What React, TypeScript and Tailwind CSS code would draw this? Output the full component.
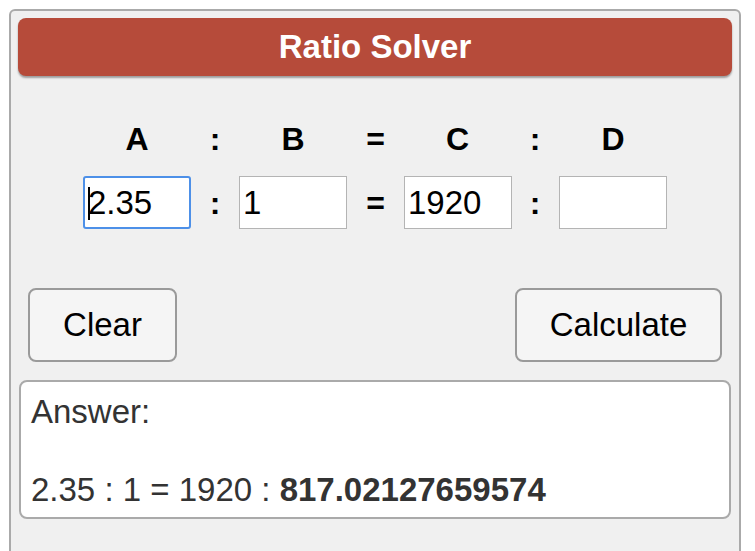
import React from "react";

const font = { fontFamily: '"Liberation Sans", Arial, sans-serif' };

function Field({ value, focused }: { value: string; focused?: boolean }) {
  return (
    <div
      className={
        "relative h-[53px] w-[108px] bg-white " +
        (focused
          ? "border-2 border-[#4d90e8] rounded-[3px]"
          : "border border-[#b4b4b4]")
      }
    >
      <input
        readOnly
        value={value}
        className="h-full w-full bg-transparent pl-[3px] text-[33px] text-black outline-none"
        style={font}
      />
      {focused && (
        <span className="absolute left-[3px] top-[9px] h-[33px] w-[2px] bg-black" />
      )}
    </div>
  );
}

export default function App() {
  return (
    <div className="min-h-[551px] bg-white pl-[9px] pt-[9px]" style={font}>
      <div className="h-[560px] w-[732px] rounded-md border-2 border-[#aaaaaa] bg-[#f0f0f0] px-[7px] pt-[7px]">
        {/* header */}
        <div className="flex h-[58px] items-center justify-center rounded-lg bg-[#b64b3a] shadow-[0_2px_2px_rgba(0,0,0,0.35)]">
          <h1 className="text-[33px] font-bold text-white">Ratio Solver</h1>
        </div>

        {/* ratio grid */}
        <div className="mt-[43px] grid grid-cols-[108px_48px_108px_57px_107px_48px_108px] justify-center">
          {["A", ":", "B", "=", "C", ":", "D"].map((l, i) => (
            <div key={i} className="flex h-[40px] items-center justify-center text-[32px] font-bold text-black">
              {l}
            </div>
          ))}
          <div className="col-span-7 h-[17px]" />
          <Field value="2.35" focused />
          <div className="flex items-center justify-center text-[32px] font-bold">:</div>
          <Field value="1" />
          <div className="flex items-center justify-center text-[32px] font-bold">=</div>
          <Field value="1920" />
          <div className="flex items-center justify-center text-[32px] font-bold">:</div>
          <Field value="" />
        </div>

        {/* buttons */}
        <div className="mt-[59px] flex justify-between px-[10px]">
          <button className="h-[74px] w-[149px] rounded-lg border-2 border-[#9a9a9a] bg-[#f5f5f5] text-[33px] text-black">
            Clear
          </button>
          <button className="h-[74px] w-[207px] rounded-lg border-2 border-[#9a9a9a] bg-[#f5f5f5] text-[33px] text-black">
            Calculate
          </button>
        </div>

        {/* answer */}
        <div className="mx-px mt-[18px] h-[139px] rounded-lg border-2 border-[#aaaaaa] bg-white px-[10px] pt-[12px] text-[33px] text-[#333333]">
          <p className="leading-[36px]">Answer:</p>
          <p className="mt-[42px] leading-[36px]">
            2.35 : 1 = 1920 : <b>817.02127659574</b>
          </p>
        </div>
      </div>
    </div>
  );
}
